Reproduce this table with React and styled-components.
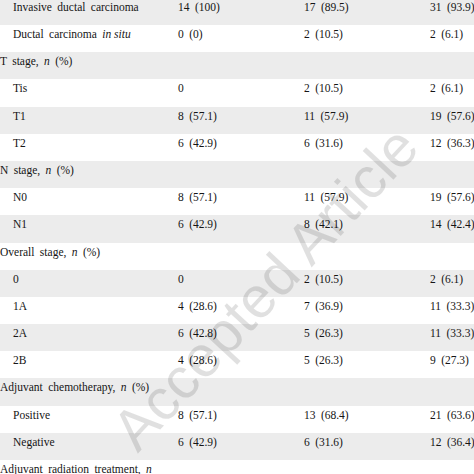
import styled, { createGlobalStyle } from 'styled-components';

const GlobalStyle = createGlobalStyle`
  html, body {
    margin: 0;
    padding: 0;
    background: #ffffff;
    overflow: hidden;
  }
  body {
    width: 474px;
    height: 474px;
  }
`;

const rows = [
    {label: 'Invasive ductal carcinoma', sub: true, values: ['14 (100)', '17 (89.5)', '31 (93.9)']},
    {label: <>Ductal carcinoma <i>in situ</i></>, sub: true, values: ['0 (0)', '2 (10.5)', '2 (6.1)']},
    {label: <>T stage, <i>n</i> (%)</>},
    {label: 'Tis', sub: true, values: ['0', '2 (10.5)', '2 (6.1)']},
    {label: 'T1', sub: true, values: ['8 (57.1)', '11 (57.9)', '19 (57.6)']},
    {label: 'T2', sub: true, values: ['6 (42.9)', '6 (31.6)', '12 (36.3)']},
    {label: <>N stage, <i>n</i> (%)</>},
    {label: 'N0', sub: true, values: ['8 (57.1)', '11 (57.9)', '19 (57.6)']},
    {label: 'N1', sub: true, values: ['6 (42.9)', '8 (42.1)', '14 (42.4)']},
    {label: <>Overall stage, <i>n</i> (%)</>},
    {label: '0', sub: true, values: ['0', '2 (10.5)', '2 (6.1)']},
    {label: '1A', sub: true, values: ['4 (28.6)', '7 (36.9)', '11 (33.3)']},
    {label: '2A', sub: true, values: ['6 (42.8)', '5 (26.3)', '11 (33.3)']},
    {label: '2B', sub: true, values: ['4 (28.6)', '5 (26.3)', '9 (27.3)']},
    {label: <>Adjuvant chemotherapy, <i>n</i> (%)</>},
    {label: 'Positive', sub: true, values: ['8 (57.1)', '13 (68.4)', '21 (63.6)']},
    {label: 'Negative', sub: true, values: ['6 (42.9)', '6 (31.6)', '12 (36.4)']},
    {label: <>Adjuvant radiation treatment, <i>n</i></>},
];

const App = () => {
    return (
        <Page>
            <GlobalStyle />
            <Table>
                {rows.map((row, i) => (
                    <Row key={i} $shaded={i % 2 === 0}>
                        <Label $sub={row.sub}>{row.label}</Label>
                        {(row.values || []).map((v, j) => (
                            <Cell key={j}>{v}</Cell>
                        ))}
                    </Row>
                ))}
            </Table>
            <Watermark>Accepted Article</Watermark>
        </Page>
    );
};

export default App;

const Page = styled.div`
  position: relative;
  width: 474px;
  height: 474px;
  overflow: hidden;
  font-family: "Liberation Serif", "Times New Roman", serif;
  color: #151515;
`;

const Table = styled.div`
  display: grid;
  grid-auto-rows: 27.2px;
  margin-top: -2.2px;
`;

const Row = styled.div`
  display: grid;
  grid-template-columns: 178px 126px 126px 1fr;
  align-items: start;
  background: ${p => (p.$shaded ? '#ececec' : '#ffffff')};
  font-size: 11.5px;
  line-height: 14px;
  word-spacing: 2.5px;
  white-space: nowrap;
`;

const Label = styled.div`
  padding: 2px 0 0 ${p => (p.$sub ? '13px' : '0')};
  grid-column: ${p => (p.$sub ? 'auto' : '1 / -1')};

  i {
    word-spacing: 0;
  }
`;

const Cell = styled.div`
  padding-top: 2px;
`;

const Watermark = styled.div`
  position: absolute;
  left: 265px;
  top: 288px;
  transform: translate(-50%, -50%) rotate(-47deg);
  font-family: "Liberation Sans", Arial, sans-serif;
  font-size: 58px;
  line-height: 1;
  color: rgba(0, 0, 0, 0.12);
  white-space: nowrap;
  pointer-events: none;
`;
